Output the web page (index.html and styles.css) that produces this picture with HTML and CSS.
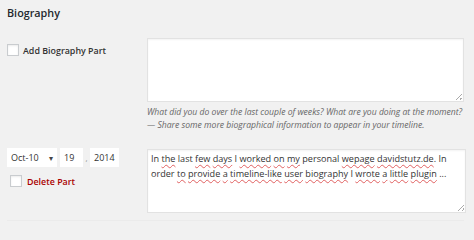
FILE: index.html
```html
<!DOCTYPE html>
<html>
<head>
<meta charset="utf-8">
<link rel="stylesheet" href="styles.css">
</head>
<body>
<div class="panel">
  <h2 class="title">Biography</h2>
  <div class="row row-first">
    <div class="side">
      <label class="check"><span class="box"></span><span class="label">Add Biography Part</span></label>
    </div>
    <div class="main">
      <div class="area"><span class="grip"></span></div>
      <p class="desc">What did you do over the last couple of weeks? What are you doing at the moment?<br>— Share some more biographical information to appear in your timeline.</p>
    </div>
  </div>
  <div class="row row-second">
    <div class="side">
      <div class="date">
        <span class="field sel">Oct-10<span class="arrow">▾</span></span>
        <span class="field day">19</span>
        <span class="sep">,</span>
        <span class="field year">2014</span>
      </div>
      <label class="check del"><span class="box"></span><span class="label red">Delete Part</span></label>
    </div>
    <div class="main">
      <div class="area filled">In <u>the</u> last <u>few</u> <u>days</u> I <u>worked</u> <u>on</u> <u>my</u> personal <u>wepage</u> <u>davidstutz.de</u>. In<br>order <u>to</u> <u>provide</u> <u>a</u> <u>timeline-like</u> <u>user</u> <u>biography</u> I <u>wrote</u> <u>a</u> <u>little</u> <u>plugin</u> ...<span class="grip"></span></div>
    </div>
  </div>
  <div class="foot"></div>
</div>
</body>
</html>
```

FILE: styles.css
```css
html, body {
  margin: 0;
  padding: 0;
  background: #f1f1f1;
}
body {
  font-family: "Open Sans", "Noto Sans", sans-serif;
  color: #444;
  width: 474px;
  height: 225px;
  overflow: hidden;
}
.panel {
  padding: 0 10px 0 7px;
}
.title {
  margin: 0;
  padding-top: 4px;
  height: 30px;
  font-size: 10.8px;
  font-weight: 600;
  color: #23282d;
  line-height: 18px;
}
.row {
  display: grid;
  grid-template-columns: 140px 317px;
}
.row-first {
  padding-top: 4px;
}
.row-second {
  padding-top: 17px;
}
.side {
  display: flex;
  flex-direction: column;
}
.check {
  display: flex;
  align-items: center;
  gap: 4px;
  height: 12px;
}
.row-first .check {
  margin-top: 6px;
}
.box {
  width: 10px;
  height: 10px;
  background: #fff;
  border: 1px solid #c9cccf;
  box-shadow: inset 0 1px 2px rgba(0,0,0,0.08);
  flex: none;
}
.label {
  font-size: 8.9px;
  font-weight: 600;
  color: #333;
  white-space: nowrap;
}
.label.red {
  color: #a00;
}
.del {
  margin-top: 8px;
  margin-left: 3px;
  gap: 5px;
}
.area {
  position: relative;
  height: 62px;
  background: #fff;
  border: 1px solid #e2e2e2;
  box-shadow: inset 0 1px 2px rgba(0,0,0,0.05);
  box-sizing: content-box;
}
.filled {
  font-size: 9.1px;
  line-height: 15px;
  color: #333;
  white-space: nowrap;
  width: 314px;
  padding: 1px 0 0 3px;
  height: 61px;
}
.filled u {
  text-decoration: underline wavy #e06060;
  text-decoration-thickness: 1px;
  text-underline-offset: 2px;
}
.grip {
  position: absolute;
  right: 1px;
  bottom: 1px;
  width: 6px;
  height: 6px;
  background: linear-gradient(135deg, transparent 45%, #aaa 45%, #aaa 55%, transparent 55%, transparent 75%, #aaa 75%, #aaa 85%, transparent 85%);
}
.desc {
  margin: 4px 0 0 0;
  font-size: 8.6px;
  font-style: italic;
  line-height: 13px;
  color: #666;
  white-space: nowrap;
}
.date {
  display: flex;
  align-items: center;
  height: 19px;
  margin-top: -1px;
}
.field {
  display: flex;
  align-items: center;
  height: 19px;
  background: #fff;
  font-size: 9px;
  color: #333;
  padding: 0 4px;
  box-sizing: border-box;
}
.sel {
  width: 50px;
  justify-content: space-between;
}
.arrow {
  font-size: 8px;
  color: #444;
}
.day {
  width: 23px;
  margin-left: 3px;
}
.sep {
  font-size: 8px;
  color: #888;
  width: 7px;
  text-align: center;
}
.year {
  width: 29px;
}
.foot {
  margin-top: 7px;
  height: 6px;
  border-top: 1px solid #ebebeb;
}
```
